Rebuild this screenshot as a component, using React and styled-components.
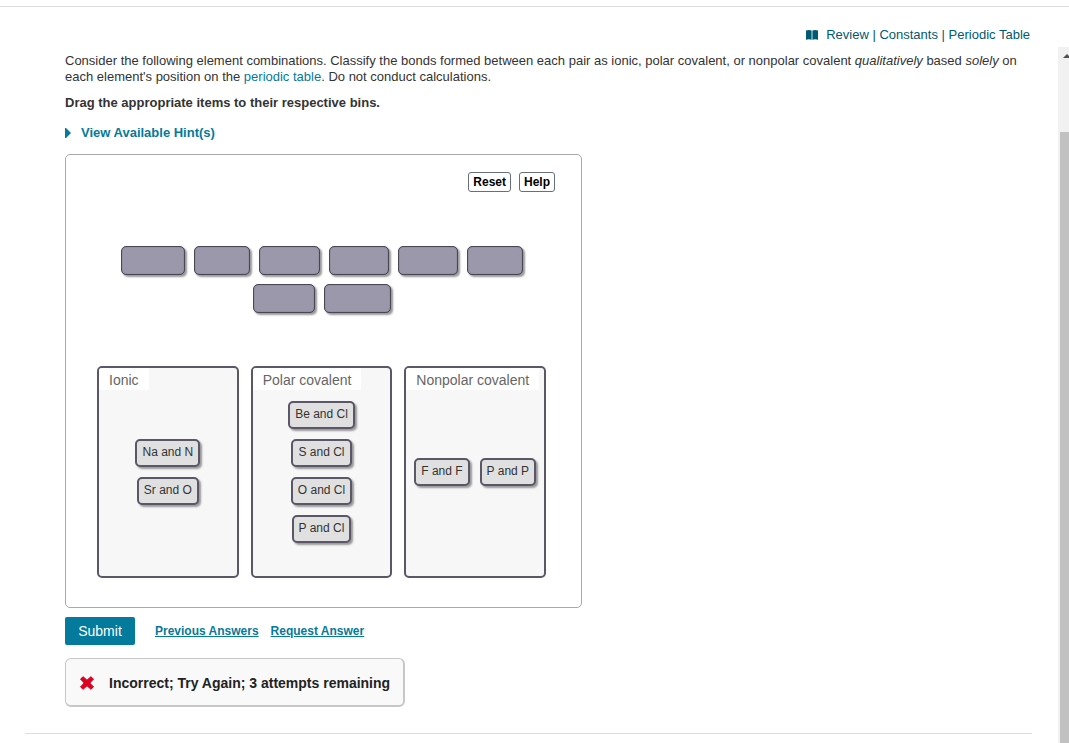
import React from "react"
import styled, { createGlobalStyle } from "styled-components"

const GlobalStyle = createGlobalStyle`
  * {
    box-sizing: border-box;
  }

  body {
    margin: 0;
    background: #fff;
    color: #333;
    font-family: "Liberation Sans", Arial, sans-serif;
    font-size: 13px;
    line-height: 16px;
  }

  button {
    font-family: inherit;
    cursor: pointer;
  }
`

const Page = styled.div`
  display: flex;
  flex-direction: column;
  min-height: 100vh;
  padding-top: 6px;
`

const TopBar = styled.header`
  display: flex;
  justify-content: flex-end;
  align-items: center;
  height: 41px;
  padding: 16px 39px 0 0;
  border-top: 1px solid #ddd;
  color: #005a70;
`

const TopNav = styled.nav`
  display: flex;
  align-items: center;
  gap: 8px;
`

const TopLink = styled.a`
  color: #005a70;
  text-decoration: none;
`

const Body = styled.div`
  display: flex;
  flex: 1;
`

const Content = styled.main`
  flex: 1;
  min-width: 0;
  padding: 6px 26px 0 25px;
`

const Question = styled.section`
  padding: 0 10px 26px 40px;
  border-bottom: 1px solid #ddd;
`

const Intro = styled.p`
  margin: 0 0 10px;
`

const Instruction = styled.p`
  margin: 0 0 14px;
  font-weight: bold;
`

const TextLink = styled.a`
  color: #047a9c;
  text-decoration: none;
`

const HintButton = styled.button`
  display: flex;
  align-items: center;
  gap: 10px;
  margin: 0 0 13px;
  padding: 0;
  border: none;
  background: none;
  color: #047a9c;
  font-size: 13px;
  font-weight: bold;
  line-height: 16px;
`

const Activity = styled.div`
  width: 517px;
  max-width: 100%;
  padding: 17px 26px 29px;
  border: 1px solid #a9a9a9;
  border-radius: 5px;
`

const Tools = styled.div`
  display: flex;
  justify-content: flex-end;
  gap: 8px;
`

const ToolButton = styled.button`
  height: 20px;
  padding: 0 4px;
  border: 1px solid #66707a;
  border-radius: 3px;
  background: #fff;
  color: #000;
  font-size: 12px;
  font-weight: bold;
`

const Bank = styled.div`
  display: flex;
  flex-wrap: wrap;
  justify-content: center;
  gap: 9px;
  max-width: 450px;
  margin: 54px 8px 53px 5px;
`

const Slot = styled.div`
  width: ${({ $width }) => $width}px;
  height: 29px;
  border: 1px solid #4a4654;
  border-radius: 5px;
  background: #9b98ab;
  box-shadow: inset 0 0 1px #4a4654, 2px 2px 2px #999;
`

const Bins = styled.div`
  display: grid;
  grid-template-columns: repeat(3, 1fr);
  gap: 12px;
  margin: 0 9px 0 5px;
`

const BinBox = styled.section`
  display: grid;
  min-height: 212px;
  border: 2px solid #5b5768;
  border-radius: 5px;
  background: #f7f7f7;
`

const BinTitle = styled.h2`
  grid-area: 1 / 1;
  align-self: start;
  justify-self: start;
  margin: 0;
  padding: 4px 10px 2px;
  border-top-left-radius: 3px;
  background: #fff;
  color: #666;
  font-size: 14px;
  font-weight: normal;
  line-height: 16px;
`

const BinItems = styled.div`
  grid-area: 1 / 1;
  display: flex;
  flex-direction: ${({ $row }) => ($row ? "row" : "column")};
  justify-content: center;
  align-items: center;
  gap: 10px;
`

const Tile = styled.button`
  height: 28px;
  padding: 0 5px 3px;
  border: 2px solid #5b5768;
  border-radius: 5px;
  background: #e0e0e0;
  box-shadow: 2px 2px 2px #999;
  color: #333;
  font-size: 12px;
  white-space: nowrap;
`

const Actions = styled.div`
  display: flex;
  align-items: center;
  gap: 12px;
  margin: 9px 0 13px;
`

const SubmitButton = styled.button`
  width: 70px;
  height: 28px;
  margin-right: 8px;
  padding: 0;
  border: none;
  border-radius: 2px;
  background: #047a9c;
  color: #fff;
  font-size: 14px;
`

const ActionLink = styled.a`
  color: #047a9c;
  font-size: 12px;
  font-weight: bold;
`

const Feedback = styled.div`
  display: inline-flex;
  align-items: center;
  gap: 14px;
  height: 49px;
  padding: 2px 13px 0 14px;
  border: 1px solid #c7c7c7;
  border-right-width: 2px;
  border-bottom-width: 2px;
  border-radius: 6px;
  background: #f9f9f9;
  color: #222;
  font-size: 14px;
  font-weight: bold;
`

const ScrollTrack = styled.div`
  display: flex;
  flex-direction: column;
  width: 11px;
  padding-left: 2px;
  background: #f1f1f1;
  overflow: hidden;
`

const ScrollArrow = styled.svg`
  margin: 6px 0 73px 2px;
`

const ScrollThumb = styled.div`
  flex: 1;
  background: #c1c1c1;
`

const slots = [64, 56, 61, 60, 60, 56, 62, 67]

const bins = [
  { title: "Ionic", items: ["Na and N", "Sr and O"] },
  {
    title: "Polar covalent",
    items: ["Be and Cl", "S and Cl", "O and Cl", "P and Cl"],
  },
  { title: "Nonpolar covalent", items: ["F and F", "P and P"], row: true },
]

const BookIcon = () => (
  <svg width="12" height="10" viewBox="0 0 12 10" aria-hidden="true">
    <path
      d="M0 .6Q3-.4 5.6.6V9.8Q3 8.8 0 9.8ZM6.4.6Q9-.4 12 .6V9.8Q9 8.8 6.4 9.8Z"
      fill="#005a70"
    />
  </svg>
)

const CrossIcon = () => (
  <svg width="15" height="14" viewBox="0 0 15 14" aria-hidden="true">
    <path
      d="M3.1.7 7 4.2 10.9.7 13.5 3.1 9.8 7 13.5 10.9 10.9 13.3 7 9.8 3.1 13.3.5 10.9 4.2 7 .5 3.1Z"
      fill="#db0020"
      stroke="#db0020"
      strokeLinejoin="round"
    />
  </svg>
)

const Bin = ({ title, items, row }) => (
  <BinBox>
    <BinTitle>{title}</BinTitle>
    <BinItems $row={row}>
      {items.map(item => (
        <Tile key={item} type="button" draggable>
          {item}
        </Tile>
      ))}
    </BinItems>
  </BinBox>
)

const App = () => {
  return (
    <>
      <GlobalStyle />
      <Page>
        <TopBar>
          <TopNav>
            <BookIcon />
            <span>
              <TopLink href="#review">Review</TopLink> |{" "}
              <TopLink href="#constants">Constants</TopLink> |{" "}
              <TopLink href="#periodic-table">Periodic Table</TopLink>
            </span>
          </TopNav>
        </TopBar>
        <Body>
          <Content>
            <Question>
              <Intro>
                Consider the following element combinations. Classify the bonds
                formed between each pair as ionic, polar covalent, or nonpolar
                covalent <em>qualitatively</em> based <em>solely</em> on each
                element's position on the{" "}
                <TextLink href="#periodic-table">periodic table</TextLink>. Do
                not conduct calculations.
              </Intro>
              <Instruction>
                Drag the appropriate items to their respective bins.
              </Instruction>
              <HintButton type="button">
                <svg width="6" height="10" aria-hidden="true">
                  <path d="M0 0H1L6 5 1 10H0Z" fill="#047a9c" />
                </svg>
                View Available Hint(s)
              </HintButton>
              <Activity>
                <Tools>
                  <ToolButton type="button">Reset</ToolButton>
                  <ToolButton type="button">Help</ToolButton>
                </Tools>
                <Bank>
                  {slots.map((width, i) => (
                    <Slot key={i} $width={width} />
                  ))}
                </Bank>
                <Bins>
                  {bins.map(bin => (
                    <Bin key={bin.title} {...bin} />
                  ))}
                </Bins>
              </Activity>
              <Actions>
                <SubmitButton type="submit">Submit</SubmitButton>
                <ActionLink href="#previous">Previous Answers</ActionLink>
                <ActionLink href="#request">Request Answer</ActionLink>
              </Actions>
              <Feedback role="status">
                <CrossIcon />
                Incorrect; Try Again; 3 attempts remaining
              </Feedback>
            </Question>
          </Content>
          <ScrollTrack aria-hidden="true">
            <ScrollArrow width="10" height="6" viewBox="0 0 10 6">
              <path d="M1 5 5 1 9 5Z" fill="#505050" />
            </ScrollArrow>
            <ScrollThumb />
          </ScrollTrack>
        </Body>
      </Page>
    </>
  )
}

export default App
